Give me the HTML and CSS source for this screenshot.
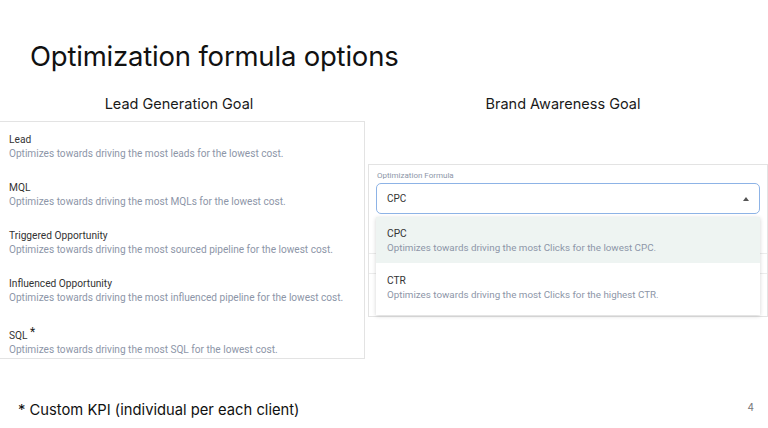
FILE: index.html
```html
<!DOCTYPE html>
<html>
<head>
<meta charset="utf-8">
<link rel="stylesheet" href="styles.css">
</head>
<body>
<div class="slide">
  <h1 class="title">Optimization formula options</h1>
  <div class="columns">
    <div class="col col-left">
      <h2 class="goal">Lead Generation Goal</h2>
      <div class="card list">
        <div class="item"><div class="name">Lead</div><div class="desc">Optimizes towards driving the most leads for the lowest cost.</div></div>
        <div class="item"><div class="name">MQL</div><div class="desc">Optimizes towards driving the most MQLs for the lowest cost.</div></div>
        <div class="item"><div class="name">Triggered Opportunity</div><div class="desc">Optimizes towards driving the most sourced pipeline for the lowest cost.</div></div>
        <div class="item"><div class="name">Influenced Opportunity</div><div class="desc">Optimizes towards driving the most influenced pipeline for the lowest cost.</div></div>
        <div class="item"><div class="name">SQL <span class="star">*</span></div><div class="desc">Optimizes towards driving the most SQL for the lowest cost.</div></div>
      </div>
    </div>
    <div class="col col-right">
      <h2 class="goal">Brand Awareness Goal</h2>
      <div class="card formula">
        <div class="label">Optimization Formula</div>
        <div class="select"><span>CPC</span><span class="caret"></span></div>
        <div class="behind"><div class="line l1"></div><div class="line l2"></div></div>
        <div class="menu">
          <div class="opt active"><div class="name">CPC</div><div class="desc">Optimizes towards driving the most Clicks for the lowest CPC.</div></div>
          <div class="opt"><div class="name">CTR</div><div class="desc">Optimizes towards driving the most Clicks for the highest CTR.</div></div>
        </div>
      </div>
    </div>
  </div>
  <div class="footer">
    <div class="note">* Custom KPI (individual per each client)</div>
    <div class="page">4</div>
  </div>
</div>
</body>
</html>
```
FILE: styles.css
```css
* { box-sizing: border-box; }
html, body { margin: 0; padding: 0; background: #fff; }
.slide {
  width: 768px; height: 428px; overflow: hidden;
  display: flex; flex-direction: column;
  font-family: Roboto, "Liberation Sans", sans-serif;
}
.title {
  margin: 39px 0 0 30px;
  font-family: Inter, "Noto Sans", sans-serif;
  font-weight: 400; font-size: 27.5px; line-height: 34px;
  color: #111; letter-spacing: -0.2px;
}
.columns { display: flex; margin-top: 21px; }
.col { display: flex; flex-direction: column; }
.col-left { width: 365px; }
.col-right { width: 400px; margin-left: 3px; }
.goal {
  margin: 0; text-align: center;
  font-family: Inter, "Noto Sans", sans-serif;
  font-weight: 400; font-size: 14.5px; line-height: 20px; color: #1a1a1a;
}
.col-left .goal { margin-left: -7px; }
.col-right .goal { margin-left: -10px; }
.card { border: 1px solid #e3e3e3; background: #fff; }
.list {
  margin-top: 7px; border-left: none; height: 238px;
  padding: 11px 0 0 9px;
}
.item { height: 48px; }
.name { font-size: 10.2px; line-height: 14px; color: #333; }
.desc { font-size: 10.1px; line-height: 14px; color: #8d96a8; }
.star { font-size: 12px; vertical-align: 3px; color: #222; }
.formula {
  margin-top: 50px; height: 153px; position: relative;
  padding: 5px 7px 0 7px;
}
.label { font-size: 8px; line-height: 11px; color: #8d96a8; margin-left: 1px; }
.select {
  margin-top: 2px; height: 31px; border: 1px solid #8db3e6; border-radius: 5px;
  display: flex; align-items: center; justify-content: space-between;
  padding: 0 10px 0 10px; font-size: 10px; color: #333;
}
.caret {
  width: 0; height: 0; border-left: 3.5px solid transparent; border-right: 3.5px solid transparent;
  border-bottom: 4px solid #555;
}
.behind { position: absolute; left: 0; right: 0; top: 88px; }
.line { height: 1px; background: #ececec; margin-bottom: 19px; }
.menu {
  position: absolute; left: 7px; right: 7px; top: 52px; height: 98px;
  background: #fff; box-shadow: 0 1px 4px rgba(0,0,0,0.18);
}
.opt { height: 46px; padding: 10px 11px 0 11px; }
.opt .desc { font-size: 9.8px; }
.opt.active { background: #eef4f2; }
.opt + .opt { padding-top: 11px; }
.footer {
  display: flex; justify-content: space-between; align-items: center;
  margin-top: 42px; padding: 0 14px 0 18px;
}
.note { font-family: Inter, "Noto Sans", sans-serif; font-size: 14.75px; color: #111; }
.page { font-family: Inter, "Noto Sans", sans-serif; font-size: 10px; color: #777; margin-top: -6px; }
```
